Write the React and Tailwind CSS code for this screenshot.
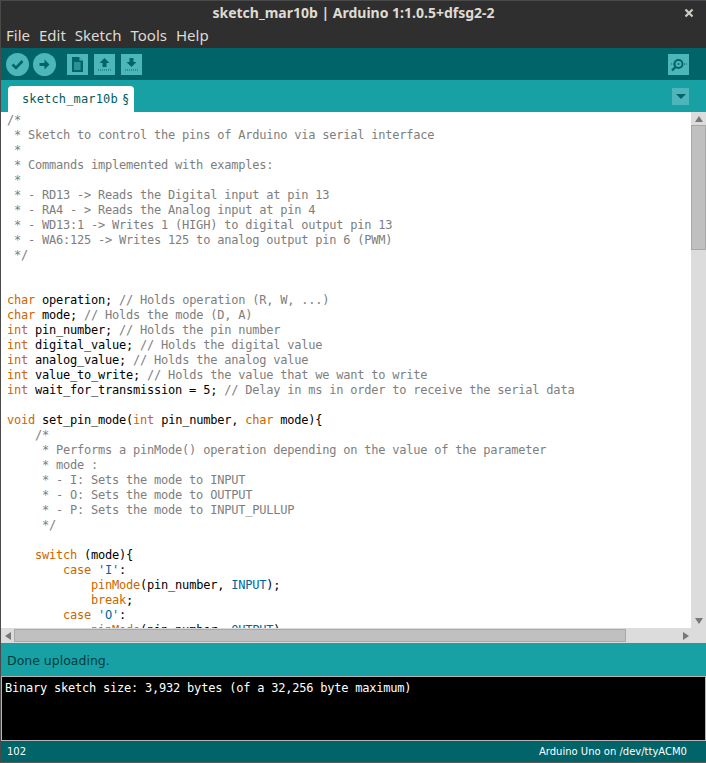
import React from 'react';

const mono = "font-['DejaVu_Sans_Mono',monospace]";

// k = keyword, c = comment, v = constant, p = plain
const code = [
    [['c', '/*']],
    [['c', ' * Sketch to control the pins of Arduino via serial interface']],
    [['c', ' *']],
    [['c', ' * Commands implemented with examples:']],
    [['c', ' *']],
    [['c', ' * - RD13 -> Reads the Digital input at pin 13']],
    [['c', ' * - RA4 - > Reads the Analog input at pin 4']],
    [['c', ' * - WD13:1 -> Writes 1 (HIGH) to digital output pin 13']],
    [['c', ' * - WA6:125 -> Writes 125 to analog output pin 6 (PWM)']],
    [['c', ' */']],
    [],
    [],
    [['k', 'char'], ['p', ' operation; '], ['c', '// Holds operation (R, W, ...)']],
    [['k', 'char'], ['p', ' mode; '], ['c', '// Holds the mode (D, A)']],
    [['k', 'int'], ['p', ' pin_number; '], ['c', '// Holds the pin number']],
    [['k', 'int'], ['p', ' digital_value; '], ['c', '// Holds the digital value']],
    [['k', 'int'], ['p', ' analog_value; '], ['c', '// Holds the analog value']],
    [['k', 'int'], ['p', ' value_to_write; '], ['c', '// Holds the value that we want to write']],
    [['k', 'int'], ['p', ' wait_for_transmission = 5; '], ['c', '// Delay in ms in order to receive the serial data']],
    [],
    [['k', 'void'], ['p', ' set_pin_mode('], ['k', 'int'], ['p', ' pin_number, '], ['k', 'char'], ['p', ' mode){']],
    [['c', '    /*']],
    [['c', '     * Performs a pinMode() operation depending on the value of the parameter']],
    [['c', '     * mode :']],
    [['c', '     * - I: Sets the mode to INPUT']],
    [['c', '     * - O: Sets the mode to OUTPUT']],
    [['c', '     * - P: Sets the mode to INPUT_PULLUP']],
    [['c', '     */']],
    [],
    [['k', '    switch'], ['p', ' (mode){']],
    [['k', '        case'], ['p', ' '], ['v', "'I'"], ['p', ':']],
    [['k', '            pinMode'], ['p', '(pin_number, '], ['v', 'INPUT'], ['p', ');']],
    [['k', '            break'], ['p', ';']],
    [['k', '        case'], ['p', ' '], ['v', "'O'"], ['p', ':']],
    [['k', '            pinMode'], ['p', '(pin_number, '], ['v', 'OUTPUT'], ['p', ');']],
];

const tokenClass = {
    k: 'text-[#cc6600]',
    c: 'text-[#7e7e7e]',
    v: 'text-[#006699]',
    p: 'text-black',
};

const dots = (
    <path d="M4 16h1M6 16h1M8 16h1M10 16h1M12 16h1M14 16h1M16 16h1" stroke="#006468" strokeWidth="1" />
);

const RoundButton = ({ children }) => (
    <div className="w-[23px] h-[23px] rounded-full bg-[#4db6ba] flex items-center justify-center">
        {children}
    </div>
);

const SquareButton = ({ children, className = '' }) => (
    <div className={`w-[21px] h-[21px] bg-[#4db6ba] ${className}`}>
        <svg width="21" height="21" viewBox="0 0 21 21">{children}</svg>
    </div>
);

const App = () => {
    return (
        <div className="w-[706px] h-[763px] flex flex-col overflow-hidden bg-[#e5e5e5] border-l border-b border-l-[#4a4a4a] border-b-[#5a5a5a]">
            {/* title + menu */}
            <div className="h-[48px] shrink-0 bg-[#2f2f2f] border-t border-[#4a4a4a] font-['Noto_Sans',sans-serif]">
                <div className="h-[23px] flex items-center relative">
                    <div className="flex-1 text-center text-[14px] font-bold text-[#dfdbd2]">sketch_mar10b | Arduino 1:1.0.5+dfsg2-2</div>
                    <svg width="10" height="10" viewBox="0 0 10 10" className="absolute right-[12px] top-[7px]">
                        <path d="M1.5 1.5l7 7M8.5 1.5l-7 7" stroke="#d0cdc6" strokeWidth="2.2" />
                    </svg>
                </div>
                <div className="flex items-center h-[22px] pl-[5px] gap-[9px] text-[15px] text-[#dfdbd2]">
                    <span>File</span>
                    <span>Edit</span>
                    <span>Sketch</span>
                    <span>Tools</span>
                    <span>Help</span>
                </div>
            </div>

            {/* toolbar */}
            <div className="h-[32px] shrink-0 bg-[#006468] flex items-center pl-[5px] pr-[17px]">
                <RoundButton>
                    <svg width="15" height="15" viewBox="0 0 15 15">
                        <path d="M2.5 7.5l3.5 3.5 6.5-7" fill="none" stroke="#006468" strokeWidth="2.6" />
                    </svg>
                </RoundButton>
                <div className="ml-[4px]">
                    <RoundButton>
                        <svg width="15" height="15" viewBox="0 0 15 15">
                            <path d="M2.5 6h5V2.5l5 5-5 5V9h-5z" fill="#006468" />
                        </svg>
                    </RoundButton>
                </div>
                <SquareButton className="ml-[11px]">
                    <path d="M5 3h7l4 4v11H5z" fill="#006468" />
                    <path d="M12.5 3.5l3 3h-3z" fill="#4db6ba" />
                    <path d="M7 9h7M7 11h7M7 13h7M7 15h7M8 8v8M10 8v8M12 8v8" stroke="#4db6ba" strokeWidth="0.7" fill="none" />
                </SquareButton>
                <SquareButton className="ml-[6px]">
                    <path d="M10.5 4l5 5h-3v4h-4V9h-3z" fill="#006468" />
                    {dots}
                </SquareButton>
                <SquareButton className="ml-[6px]">
                    <path d="M8.5 4h4v4h3l-5 5-5-5h3z" fill="#006468" />
                    {dots}
                </SquareButton>
                <div className="flex-1" />
                <SquareButton>
                    <circle cx="10.5" cy="10" r="4" fill="none" stroke="#006468" strokeWidth="2" />
                    <circle cx="10.5" cy="10" r="1" fill="#006468" />
                    <path d="M7.5 13l-3.5 3.5" stroke="#006468" strokeWidth="2.4" />
                    <path d="M3 10h1M5 10h1M16 10h1M18 10h1" stroke="#006468" strokeWidth="1" />
                </SquareButton>
            </div>

            {/* tab header */}
            <div className="h-[32px] shrink-0 bg-[#17a1a5] flex items-end pl-[7px] pr-[17px] relative">
                <div className={`w-[126px] h-[26px] bg-white rounded-t-[4px] pl-[14px] flex items-center text-[12px] tracking-[0.15px] text-[#005c5f] ${mono}`}>
                    sketch_mar10b<span className="ml-[4px]">§</span>
                </div>
                <div className="flex-1" />
                <div className="w-[17px] h-[17px] bg-[#4db6ba] mb-[7px] flex items-center justify-center">
                    <div className="w-0 h-0 border-l-[5px] border-r-[5px] border-t-[5px] border-l-transparent border-r-transparent border-t-[#006468]" />
                </div>
            </div>

            {/* editor */}
            <div className="flex-1 min-h-0 flex bg-white">
                <div className={`flex-1 min-w-0 overflow-hidden pl-[6px] pt-[1px] text-[12px] tracking-[-0.22px] leading-[15px] ${mono}`}>
                    {code.map((line, i) => (
                        <div key={i} className="h-[15px] whitespace-pre">
                            {line.map(([type, text], j) => (
                                <span key={j} className={tokenClass[type]}>{text}</span>
                            ))}
                        </div>
                    ))}
                </div>
                <div className="w-[15px] shrink-0 flex flex-col bg-[#dcdcdc]">
                    <div className="h-[13px] flex items-center justify-center">
                        <div className="w-0 h-0 border-l-[4px] border-r-[4px] border-b-[6px] border-l-transparent border-r-transparent border-b-[#777777]" />
                    </div>
                    <div className="h-[125px] bg-[#c0c0c0] border border-[#a8a8a8]" />
                    <div className="flex-1" />
                    <div className="h-[15px] flex items-center justify-center">
                        <div className="w-0 h-0 border-l-[4px] border-r-[4px] border-t-[6px] border-l-transparent border-r-transparent border-t-[#777777]" />
                    </div>
                </div>
            </div>

            {/* horizontal scrollbar */}
            <div className="h-[15px] shrink-0 flex bg-[#dcdcdc]">
                <div className="w-[13px] flex items-center justify-center">
                    <div className="w-0 h-0 border-t-[4px] border-b-[4px] border-r-[6px] border-t-transparent border-b-transparent border-r-[#777777]" />
                </div>
                <div className="w-[612px] h-[13px] mt-[1px] bg-[#c0c0c0] border border-[#a8a8a8]" />
                <div className="flex-1 flex items-center justify-end pr-[17px]">
                    <div className="w-0 h-0 border-t-[4px] border-b-[4px] border-l-[6px] border-t-transparent border-b-transparent border-l-[#777777]" />
                </div>
            </div>

            {/* status */}
            <div className="h-[33px] shrink-0 bg-[#17a1a5] flex items-center pl-[6px] pt-[4px] text-[12.5px] text-[#003c3e] font-['DejaVu_Sans',sans-serif]">
                Done uploading.
            </div>

            {/* console */}
            <div className={`h-[65px] shrink-0 bg-black border border-[#b4b4b4] pl-[3px] pt-[4px] text-[12px] tracking-[-0.22px] leading-[15px] text-white whitespace-pre ${mono}`}>
                Binary sketch size: 3,932 bytes (of a 32,256 byte maximum)
            </div>

            {/* footer */}
            <div className="h-[21px] shrink-0 bg-[#006468] flex items-center justify-between pl-[6px] pr-[19px] text-[10px] text-white font-['DejaVu_Sans',sans-serif]">
                <span>102</span>
                <span>Arduino Uno on /dev/ttyACM0</span>
            </div>
        </div>
    );
};

export default App;
